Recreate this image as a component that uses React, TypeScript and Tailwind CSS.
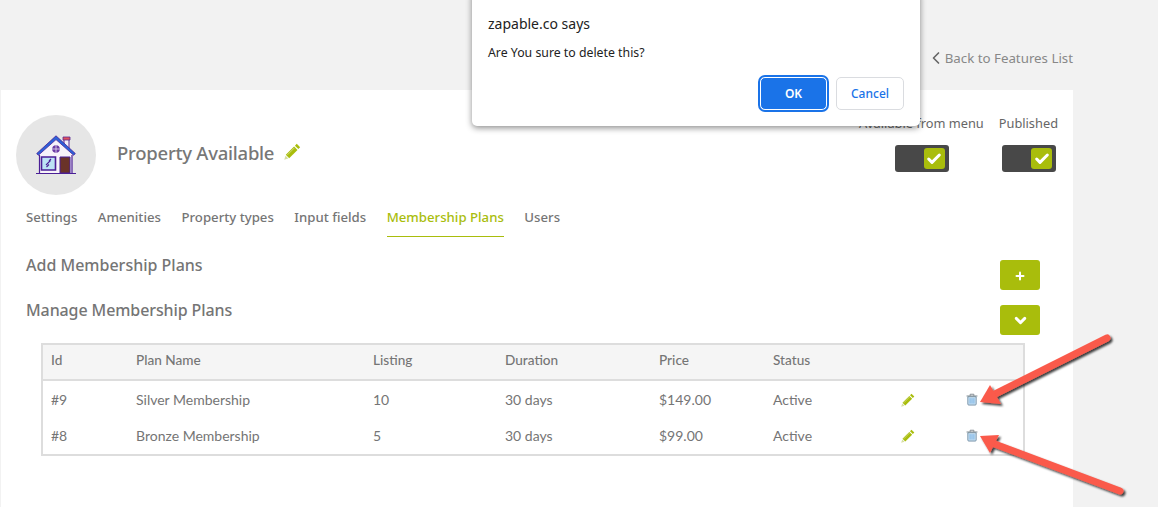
import { Check, ChevronDown, ChevronLeft, Plus } from "lucide-react";

const heading = "font-['Noto_Sans',sans-serif]";
const plans = [
  { id: "#9", name: "Silver Membership", listing: "10", duration: "30 days", price: "$149.00", status: "Active" },
  { id: "#8", name: "Bronze Membership", listing: "5", duration: "30 days", price: "$99.00", status: "Active" },
];
const tabs = ["Settings", "Amenities", "Property types", "Input fields", "Membership Plans", "Users"];
const rowGrid = "grid grid-cols-[85px_237px_132px_154px_114px_128px_65px_1fr] items-center pl-2";

function Pencil({ className }: { className: string }) {
  return (
    <svg viewBox="0 0 16 16" className={className}>
      <path d="M12 .8l3.2 3.2-1.7 1.7-3.2-3.2z" fill="#a9bd0c" />
      <path d="M9.5 3.3l3.2 3.2-7.8 7.8-3.2-3.2z" fill="#a9bd0c" />
      <path d="M1.4 11.9l2.7 2.7-3.9 1.2z" fill="#d6dfa0" />
      <path d="M3.2 11.2l6.6-6.6" stroke="#d5df8e" strokeWidth="0.8" />
    </svg>
  );
}

function Trash() {
  return (
    <svg viewBox="0 0 13 13" className="h-[13px] w-[12px]" fill="none">
      <path d="M2 3.5h9v8a1 1 0 0 1-1 1H3a1 1 0 0 1-1-1z" fill="#cfe6f7" stroke="#6f8ba3" />
      <path d="M.6 2.7h11.8M4.5 2.5V.8h4v1.7" stroke="#7c858c" />
      <path d="M4.4 5v6M6.5 5v6M8.6 5v6" stroke="#6aa8de" />
    </svg>
  );
}

function House() {
  return (
    <svg viewBox="0 0 40 40" className="h-10 w-10">
      <path d="M28 4h5v11h-5z" fill="#f4f1f7" stroke="#5b2a92" />
      <path d="M27 2h7v3h-7z" fill="#e0505a" stroke="#5b2a92" strokeWidth="0.8" />
      <path d="M4 17L20 4l16 13v21H4z" fill="#f7f3fa" />
      <path d="M.7 18.5L20 .8l19.3 17.7-1.6 1.8L20 4.6 2.3 20.3z" fill="#2b63d8" stroke="#4b1f96" strokeWidth="0.8" />
      <circle cx="20" cy="14" r="3.8" fill="#6a3aa4" />
      <path d="M20 10.2v7.6M16.2 14h7.6" stroke="#e8e0f0" strokeWidth="0.8" />
      <path d="M5.5 22h14v13h-14z" fill="#bde3f5" stroke="#4b1f96" strokeWidth="1.6" />
      <path d="M10 30l4.5-4.5M10.5 32l2.5-2.5M13 26l2-2" stroke="#4b1f96" strokeWidth="1.1" />
      <path d="M24 22h10v16H24z" fill="#6a3328" stroke="#4b1f96" strokeWidth="1" />
      <path d="M3.5 20v18M36 20v18" stroke="#4b1f96" strokeWidth="1.2" />
      <path d="M0 38.5h40" stroke="#4b1f96" strokeWidth="1.2" />
    </svg>
  );
}

function Toggle() {
  return (
    <div className="flex h-[27px] w-[54px] items-center justify-end rounded-[3px] bg-[#484848] pr-1">
      <div className="flex h-[21px] w-[21px] items-center justify-center rounded-[3px] bg-[#a9bd0c]">
        <Check size={16} strokeWidth={4.5} className="text-white" />
      </div>
    </div>
  );
}

function Arrow({ d, head }: { d: string; head: string }) {
  return (
    <g>
      <path d={d} stroke="#fa5a4b" strokeWidth="7" strokeLinecap="round" fill="none" />
      <path d={head} fill="#fa5a4b" />
    </g>
  );
}

export default function App() {
  return (
    <div className="relative h-[507px] w-[1158px] overflow-hidden bg-[#f2f2f2] font-['Lato',sans-serif] text-[#757575]">
      <div className={`flex h-[90px] items-start justify-end pr-[85px] pt-[49px] text-[13.3px] leading-[19px] text-[#888] ${heading}`}>
        <ChevronLeft size={20} strokeWidth={2} className="-mr-[1px] -mt-px text-[#666]" />
        <span>Back to Features List</span>
      </div>

      <main className="ml-px h-[417px] w-[1072px] bg-white">
        <div className="flex pl-[15px] pt-[25px]">
          <div className="flex h-20 w-20 items-center justify-center rounded-full bg-[#e6e6e6] bg-[radial-gradient(#dcdcdc_0.7px,transparent_0.7px)] bg-[length:4px_4px]">
            <House />
          </div>
          <div className={`ml-[21px] mt-[24px] flex h-[27px] items-center gap-[10px] text-[18.5px] font-medium tracking-[-0.25px] text-[#777] ${heading}`}>
            Property Available
            <Pencil className="mt-[-2px] h-[17px] w-[17px]" />
          </div>
          <div className={`ml-auto flex pr-[15px] text-[12.8px] leading-[18px] text-[#666] ${heading}`}>
            <div className="mr-[15px] flex -translate-y-px flex-col items-end">
              <span>Available from menu</span>
              <div className="mr-[35px] mt-[13px]"><Toggle /></div>
            </div>
            <div className="flex -translate-y-px flex-col items-end">
              <span>Published</span>
              <div className="mr-[2px] mt-[13px]"><Toggle /></div>
            </div>
          </div>
        </div>

        <nav className={`ml-[25px] mt-[9px] flex gap-[20.5px] text-[13.2px] font-medium ${heading}`}>
          {tabs.map((t) => (
            <div
              key={t}
              className={`h-[33px] pt-[4px] leading-[18px] ${t === "Membership Plans" ? "border-b border-[#a9bd0c] text-[#a9bd0c]" : "text-[#757575]"}`}
            >
              {t}
            </div>
          ))}
        </nav>

        <div className={`ml-[25px] mt-[23px] mr-[33px] flex h-[30px] items-start justify-between text-[16px] font-medium ${heading}`}>
          <span className="-mt-px leading-[12px]">Add Membership Plans</span>
          <button className="flex h-[30px] w-10 items-center justify-center rounded-[3px] bg-[#a9bd0c] pt-px text-white">
            <Plus size={12} strokeWidth={4} />
          </button>
        </div>
        <div className={`ml-[25px] mt-[15px] mr-[33px] flex h-[30px] items-start justify-between text-[16px] font-medium tracking-[-0.1px] ${heading}`}>
          <span className="-mt-px leading-[12px]">Manage Membership Plans</span>
          <button className="flex h-[30px] w-10 items-center justify-center rounded-[3px] bg-[#a9bd0c] text-white">
            <ChevronDown size={17} strokeWidth={4} />
          </button>
        </div>

        <div className="ml-10 mt-2 w-[984px] border-2 border-[#dddddd] text-[14px]">
          <div className={`${rowGrid} h-9 border-b-2 border-[#dddddd] bg-[#f5f5f5] pb-[3px] text-[13.6px] font-medium`}>
            <span>Id</span>
            <span>Plan Name</span>
            <span>Listing</span>
            <span>Duration</span>
            <span>Price</span>
            <span>Status</span>
          </div>
          {plans.map((p) => (
            <div key={p.id} className={`${rowGrid} h-9 last:h-[37px] last:pb-px`}>
              <span>{p.id}</span>
              <span>{p.name}</span>
              <span>{p.listing}</span>
              <span>{p.duration}</span>
              <span>{p.price}</span>
              <span>{p.status}</span>
              <Pencil className="mt-px h-[14px] w-[14px]" />
              <Trash />
            </div>
          ))}
        </div>
      </main>

      {/* browser confirm dialog */}
      <div className="absolute left-[472px] top-[-10px] h-[136px] w-[448px] rounded-[5px] bg-white shadow-[0_2px_6px_rgba(0,0,0,0.45)] font-['Noto_Sans',sans-serif]">
        <div className="pl-4 pt-[24px] text-[14px] leading-5 text-[#222]">zapable.co says</div>
        <div className="pl-4 pt-[10px] text-[12.3px] leading-[18px] text-[#222]">Are You sure to delete this?</div>
        <div className="mt-[15px] flex justify-end gap-2 pr-4">
          <button className="h-[33px] w-[67px] rounded-[5px] bg-[#1a73e8] text-[12px] font-semibold text-white outline-2 outline-offset-0 outline-[#1a73e8] border border-white">OK</button>
          <button className="ml-[1px] h-[33px] w-[68px] rounded-[5px] border border-[#dadce0] bg-white text-[12px] font-medium text-[#1a73e8]">Cancel</button>
        </div>
      </div>

      {/* annotation arrows drawn on the screenshot */}
      <svg className="pointer-events-none absolute left-0 top-0 h-[507px] w-[1158px]" viewBox="0 0 1158 507">
        <defs>
          <filter id="arrow-shadow" x="-20%" y="-20%" width="140%" height="140%">
            <feDropShadow dx="2" dy="2" stdDeviation="1" floodColor="#000" floodOpacity="0.75" />
          </filter>
        </defs>
        <g filter="url(#arrow-shadow)">
          <Arrow d="M1107 338L995 394" head="M980 402L990 385L1001 404z" />
          <Arrow d="M1120 491L992 443" head="M980 436L999 435L990 453z" />
        </g>
      </svg>
    </div>
  );
}
